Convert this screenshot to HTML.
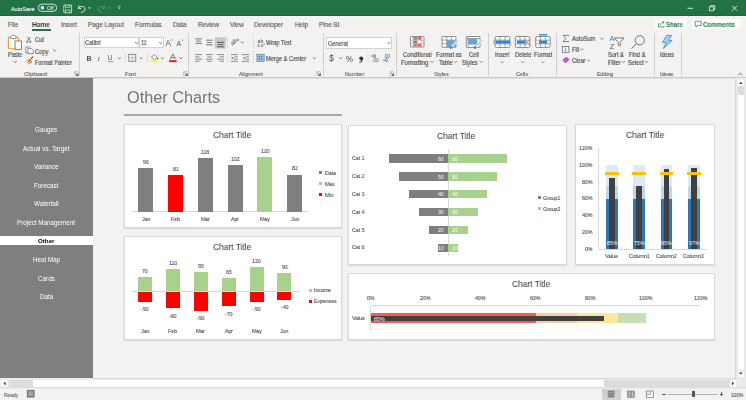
<!DOCTYPE html><html><head><meta charset="utf-8"><style>
html,body{margin:0;padding:0;width:746px;height:400px;overflow:hidden;background:#f3f2f1}
body{position:relative;font-family:"Liberation Sans",sans-serif}
div{position:absolute}
.t{white-space:nowrap;line-height:1.4;will-change:transform}
svg{position:absolute;overflow:visible}
</style></head><body>
<div style="left:0.00px;top:0.00px;width:746.00px;height:16.00px;background:#217346;"></div>
<div style="left:0.00px;top:15.00px;width:746.00px;height:1.00px;background:#1b6a3d;"></div>
<div style="left:0.00px;top:16.00px;width:746.00px;height:61.00px;background:#f3f2f1;"></div>
<div style="left:0.00px;top:16.00px;width:746.00px;height:1.00px;background:#f8f8f7;"></div>
<div style="left:0.00px;top:77.00px;width:746.00px;height:1.00px;background:#cbc9c7;"></div>
<div style="left:93.00px;top:78.00px;width:643.00px;height:1.00px;background:#e3e3e3;"></div>
<div style="left:0.00px;top:79.00px;width:736.00px;height:299.00px;background:#f2f2f2;"></div>
<div style="left:0.00px;top:78.00px;width:93.00px;height:300.00px;background:#7f7f7f;"></div>
<div class="t" style="left:8.00px;top:19.59px;font-size:7.040000000000001px;color:#555555;-webkit-text-stroke:0.12px #555555;transform:scaleX(0.9090909090909091);transform-origin:0 0;">File</div>
<div class="t" style="left:32.00px;top:19.59px;font-size:7.040000000000001px;color:#323130;font-weight:bold;transform:scaleX(0.9090909090909091);transform-origin:0 0;">Home</div>
<div class="t" style="left:60.50px;top:19.59px;font-size:7.040000000000001px;color:#555555;-webkit-text-stroke:0.12px #555555;transform:scaleX(0.9090909090909091);transform-origin:0 0;">Insert</div>
<div class="t" style="left:88.00px;top:19.59px;font-size:7.040000000000001px;color:#555555;-webkit-text-stroke:0.12px #555555;transform:scaleX(0.9090909090909091);transform-origin:0 0;">Page Layout</div>
<div class="t" style="left:135.00px;top:19.59px;font-size:7.040000000000001px;color:#555555;-webkit-text-stroke:0.12px #555555;transform:scaleX(0.9090909090909091);transform-origin:0 0;">Formulas</div>
<div class="t" style="left:173.00px;top:19.59px;font-size:7.040000000000001px;color:#555555;-webkit-text-stroke:0.12px #555555;transform:scaleX(0.9090909090909091);transform-origin:0 0;">Data</div>
<div class="t" style="left:197.70px;top:19.59px;font-size:7.040000000000001px;color:#555555;-webkit-text-stroke:0.12px #555555;transform:scaleX(0.9090909090909091);transform-origin:0 0;">Review</div>
<div class="t" style="left:229.60px;top:19.59px;font-size:7.040000000000001px;color:#555555;-webkit-text-stroke:0.12px #555555;transform:scaleX(0.9090909090909091);transform-origin:0 0;">View</div>
<div class="t" style="left:254.00px;top:19.59px;font-size:7.040000000000001px;color:#555555;-webkit-text-stroke:0.12px #555555;transform:scaleX(0.9090909090909091);transform-origin:0 0;">Developer</div>
<div class="t" style="left:295.00px;top:19.59px;font-size:7.040000000000001px;color:#555555;-webkit-text-stroke:0.12px #555555;transform:scaleX(0.9090909090909091);transform-origin:0 0;">Help</div>
<div class="t" style="left:319.40px;top:19.59px;font-size:7.040000000000001px;color:#555555;-webkit-text-stroke:0.12px #555555;transform:scaleX(0.9090909090909091);transform-origin:0 0;">Pine BI</div>
<div style="left:32.00px;top:29.00px;width:19.00px;height:2.00px;background:#217346;"></div>
<div class="t" style="left:11.00px;top:4.74px;font-size:6.05px;color:#f4f8f5;-webkit-text-stroke:0.12px #f4f8f5;transform:scaleX(0.9090909090909091);transform-origin:0 0;-webkit-text-stroke:0.15px #f4f8f5;">AutoSave</div>
<div style="left:655.00px;top:19.00px;width:32.00px;height:10.00px;background:#fff;border-radius:1px;"></div>
<div style="left:692.00px;top:19.00px;width:48.00px;height:10.00px;background:#fff;border-radius:1px;"></div>
<div class="t" style="left:666.00px;top:20.11px;font-size:6.71px;color:#217346;font-weight:bold;transform:scaleX(0.9090909090909091);transform-origin:0 0;">Share</div>
<div class="t" style="left:703.00px;top:20.09px;font-size:6.765000000000001px;color:#217346;font-weight:bold;transform:scaleX(0.9090909090909091);transform-origin:0 0;">Comments</div>
<div class="t" style="left:7.84px;top:51.46px;font-size:6.272px;color:#444444;-webkit-text-stroke:0.12px #444444;transform:scaleX(0.8928571428571428);transform-origin:0 0;">Paste</div>
<div class="t" style="left:35.00px;top:36.22px;font-size:6.384000000000001px;color:#444444;-webkit-text-stroke:0.12px #444444;transform:scaleX(0.8928571428571428);transform-origin:0 0;">Cut</div>
<div class="t" style="left:35.00px;top:47.72px;font-size:6.384000000000001px;color:#444444;-webkit-text-stroke:0.12px #444444;transform:scaleX(0.8928571428571428);transform-origin:0 0;">Copy</div>
<div class="t" style="left:35.00px;top:58.96px;font-size:6.272px;color:#444444;-webkit-text-stroke:0.12px #444444;transform:scaleX(0.8928571428571428);transform-origin:0 0;">Format Painter</div>
<div class="t" style="left:23.94px;top:70.24px;font-size:6.048000000000001px;color:#605e5c;-webkit-text-stroke:0.12px #605e5c;transform:scaleX(0.8928571428571428);transform-origin:0 0;">Clipboard</div>
<div class="t" style="left:124.60px;top:70.24px;font-size:6.048000000000001px;color:#605e5c;-webkit-text-stroke:0.12px #605e5c;transform:scaleX(0.8928571428571428);transform-origin:0 0;">Font</div>
<div class="t" style="left:239.49px;top:70.24px;font-size:6.048000000000001px;color:#605e5c;-webkit-text-stroke:0.12px #605e5c;transform:scaleX(0.8928571428571428);transform-origin:0 0;">Alignment</div>
<div class="t" style="left:344.90px;top:70.24px;font-size:6.048000000000001px;color:#605e5c;-webkit-text-stroke:0.12px #605e5c;transform:scaleX(0.8928571428571428);transform-origin:0 0;">Number</div>
<div class="t" style="left:434.15px;top:70.24px;font-size:6.048000000000001px;color:#605e5c;-webkit-text-stroke:0.12px #605e5c;transform:scaleX(0.8928571428571428);transform-origin:0 0;">Styles</div>
<div class="t" style="left:515.50px;top:70.24px;font-size:6.048000000000001px;color:#605e5c;-webkit-text-stroke:0.12px #605e5c;transform:scaleX(0.8928571428571428);transform-origin:0 0;">Cells</div>
<div class="t" style="left:596.74px;top:70.24px;font-size:6.048000000000001px;color:#605e5c;-webkit-text-stroke:0.12px #605e5c;transform:scaleX(0.8928571428571428);transform-origin:0 0;">Editing</div>
<div class="t" style="left:660.39px;top:70.24px;font-size:6.048000000000001px;color:#605e5c;-webkit-text-stroke:0.12px #605e5c;transform:scaleX(0.8928571428571428);transform-origin:0 0;">Ideas</div>
<div style="left:84.00px;top:37.00px;width:55.00px;height:11.00px;background:#fff;border:0.7px solid #d4d2d0;box-sizing:border-box;"></div>
<div style="left:139.00px;top:37.00px;width:25.00px;height:11.00px;background:#fff;border:0.7px solid #d4d2d0;box-sizing:border-box;"></div>
<div class="t" style="left:84.80px;top:39.26px;font-size:6.272px;color:#444444;-webkit-text-stroke:0.12px #444444;transform:scaleX(0.8928571428571428);transform-origin:0 0;">Calibri</div>
<div class="t" style="left:141.00px;top:39.26px;font-size:6.272px;color:#444444;-webkit-text-stroke:0.12px #444444;transform:scaleX(0.8928571428571428);transform-origin:0 0;">11</div>
<div style="left:326.00px;top:37.00px;width:66.00px;height:12.00px;background:#fff;border:0.7px solid #d4d2d0;box-sizing:border-box;"></div>
<div class="t" style="left:328.00px;top:39.66px;font-size:6.272px;color:#444444;-webkit-text-stroke:0.12px #444444;transform:scaleX(0.8928571428571428);transform-origin:0 0;">General</div>
<div class="t" style="left:266.00px;top:39.12px;font-size:6.384000000000001px;color:#444444;-webkit-text-stroke:0.12px #444444;transform:scaleX(0.8928571428571428);transform-origin:0 0;">Wrap Text</div>
<div class="t" style="left:266.00px;top:54.72px;font-size:6.384000000000001px;color:#444444;-webkit-text-stroke:0.12px #444444;transform:scaleX(0.8928571428571428);transform-origin:0 0;">Merge &amp; Center</div>
<div class="t" style="left:402.74px;top:50.92px;font-size:6.384000000000001px;color:#444444;-webkit-text-stroke:0.12px #444444;transform:scaleX(0.8928571428571428);transform-origin:0 0;">Conditional</div>
<div class="t" style="left:400.88px;top:58.82px;font-size:6.384000000000001px;color:#444444;-webkit-text-stroke:0.12px #444444;transform:scaleX(0.8928571428571428);transform-origin:0 0;">Formatting</div>
<div class="t" style="left:435.67px;top:50.92px;font-size:6.384000000000001px;color:#444444;-webkit-text-stroke:0.12px #444444;transform:scaleX(0.8928571428571428);transform-origin:0 0;">Format as</div>
<div class="t" style="left:438.69px;top:58.82px;font-size:6.384000000000001px;color:#444444;-webkit-text-stroke:0.12px #444444;transform:scaleX(0.8928571428571428);transform-origin:0 0;">Table</div>
<div class="t" style="left:468.59px;top:50.92px;font-size:6.384000000000001px;color:#444444;-webkit-text-stroke:0.12px #444444;transform:scaleX(0.8928571428571428);transform-origin:0 0;">Cell</div>
<div class="t" style="left:462.24px;top:58.82px;font-size:6.384000000000001px;color:#444444;-webkit-text-stroke:0.12px #444444;transform:scaleX(0.8928571428571428);transform-origin:0 0;">Styles</div>
<div class="t" style="left:494.87px;top:50.92px;font-size:6.384000000000001px;color:#444444;-webkit-text-stroke:0.12px #444444;transform:scaleX(0.8928571428571428);transform-origin:0 0;">Insert</div>
<div class="t" style="left:514.76px;top:50.92px;font-size:6.384000000000001px;color:#444444;-webkit-text-stroke:0.12px #444444;transform:scaleX(0.8928571428571428);transform-origin:0 0;">Delete</div>
<div class="t" style="left:533.97px;top:50.92px;font-size:6.384000000000001px;color:#444444;-webkit-text-stroke:0.12px #444444;transform:scaleX(0.8928571428571428);transform-origin:0 0;">Format</div>
<div class="t" style="left:572.00px;top:35.42px;font-size:6.384000000000001px;color:#444444;-webkit-text-stroke:0.12px #444444;transform:scaleX(0.8928571428571428);transform-origin:0 0;">AutoSum</div>
<div class="t" style="left:572.00px;top:46.22px;font-size:6.384000000000001px;color:#444444;-webkit-text-stroke:0.12px #444444;transform:scaleX(0.8928571428571428);transform-origin:0 0;">Fill</div>
<div class="t" style="left:572.00px;top:57.22px;font-size:6.384000000000001px;color:#444444;-webkit-text-stroke:0.12px #444444;transform:scaleX(0.8928571428571428);transform-origin:0 0;">Clear</div>
<div class="t" style="left:608.08px;top:50.92px;font-size:6.384000000000001px;color:#444444;-webkit-text-stroke:0.12px #444444;transform:scaleX(0.8928571428571428);transform-origin:0 0;">Sort &amp;</div>
<div class="t" style="left:607.67px;top:58.82px;font-size:6.384000000000001px;color:#444444;-webkit-text-stroke:0.12px #444444;transform:scaleX(0.8928571428571428);transform-origin:0 0;">Filter</div>
<div class="t" style="left:628.76px;top:50.92px;font-size:6.384000000000001px;color:#444444;-webkit-text-stroke:0.12px #444444;transform:scaleX(0.8928571428571428);transform-origin:0 0;">Find &amp;</div>
<div class="t" style="left:627.58px;top:58.82px;font-size:6.384000000000001px;color:#444444;-webkit-text-stroke:0.12px #444444;transform:scaleX(0.8928571428571428);transform-origin:0 0;">Select</div>
<div class="t" style="left:660.03px;top:50.92px;font-size:6.384000000000001px;color:#444444;-webkit-text-stroke:0.12px #444444;transform:scaleX(0.8928571428571428);transform-origin:0 0;">Ideas</div>
<div style="left:79.00px;top:33.00px;width:1.00px;height:43.00px;background:#d2d0ce;"></div>
<div style="left:188.00px;top:33.00px;width:1.00px;height:43.00px;background:#d2d0ce;"></div>
<div style="left:323.00px;top:33.00px;width:1.00px;height:43.00px;background:#d2d0ce;"></div>
<div style="left:396.00px;top:33.00px;width:1.00px;height:43.00px;background:#d2d0ce;"></div>
<div style="left:488.00px;top:33.00px;width:1.00px;height:43.00px;background:#d2d0ce;"></div>
<div style="left:556.00px;top:33.00px;width:1.00px;height:43.00px;background:#d2d0ce;"></div>
<div style="left:654.00px;top:33.00px;width:1.00px;height:43.00px;background:#d2d0ce;"></div>
<div style="left:681.00px;top:33.00px;width:1.00px;height:43.00px;background:#d2d0ce;"></div>
<div class="t" style="left:35.47px;top:125.95px;font-size:6.3px;color:#fff;">Gauges</div>
<div class="t" style="left:23.27px;top:144.53px;font-size:6.3px;color:#fff;">Actual vs. Target</div>
<div class="t" style="left:34.30px;top:163.11px;font-size:6.3px;color:#fff;">Variance</div>
<div class="t" style="left:34.25px;top:181.69px;font-size:6.3px;color:#fff;">Forecast</div>
<div class="t" style="left:34.19px;top:200.27px;font-size:6.3px;color:#fff;">Waterfall</div>
<div class="t" style="left:17.43px;top:218.85px;font-size:6.3px;color:#fff;">Project Management</div>
<div style="left:0.00px;top:236.00px;width:93.00px;height:9.00px;background:#fff;"></div>
<div class="t" style="left:38.23px;top:237.47px;font-size:6.2px;color:#000;font-weight:bold;">Other</div>
<div class="t" style="left:32.84px;top:256.01px;font-size:6.3px;color:#fff;">Heat Map</div>
<div class="t" style="left:38.10px;top:274.59px;font-size:6.3px;color:#fff;">Cards</div>
<div class="t" style="left:39.85px;top:293.17px;font-size:6.3px;color:#fff;">Data</div>
<div class="t" style="left:127.00px;top:85.69px;font-size:16.3px;color:#787474;">Other Charts</div>
<div style="left:124.00px;top:114.00px;width:218.00px;height:2.00px;background:#a6a6a6;"></div>
<div style="left:0.00px;top:378.00px;width:746.00px;height:11.00px;background:#ebebeb;"></div>
<div style="left:93.00px;top:378.00px;width:643.00px;height:1.00px;background:#d9d9d9;"></div>
<div style="left:0.00px;top:387.00px;width:746.00px;height:1.00px;background:#dddddd;"></div>
<div style="left:736.00px;top:79.00px;width:10.00px;height:299.00px;background:#e9e9e9;"></div>
<div style="left:735.00px;top:79.00px;width:1.00px;height:299.00px;background:#d8d8d8;"></div>
<div style="left:1.00px;top:380.00px;width:7.00px;height:7.00px;background:#fff;"></div>
<div style="left:9.00px;top:380.00px;width:24.00px;height:7.00px;background:#dcdcdc;"></div>
<div style="left:33.00px;top:380.00px;width:571.00px;height:7.00px;background:#fff;"></div>
<div style="left:604.00px;top:380.00px;width:126.00px;height:7.00px;background:#dcdcdc;"></div>
<div style="left:730.00px;top:380.00px;width:6.00px;height:7.00px;background:#fff;"></div>
<div style="left:738.00px;top:80.00px;width:6.00px;height:6.00px;background:#fff;"></div>
<div style="left:738.00px;top:86.00px;width:6.00px;height:9.00px;background:#dcdcdc;"></div>
<div style="left:738.00px;top:95.00px;width:6.00px;height:275.00px;background:#fff;"></div>
<div style="left:738.00px;top:371.00px;width:6.00px;height:6.00px;background:#fff;"></div>
<div style="left:0.00px;top:389.00px;width:746.00px;height:11.00px;background:#f3f2f1;"></div>
<div class="t" style="left:3.90px;top:391.31px;font-size:5.856px;color:#605e5c;-webkit-text-stroke:0.12px #605e5c;transform:scaleX(0.819672131147541);transform-origin:0 0;">Ready</div>
<div style="left:602.00px;top:389.00px;width:19.00px;height:11.00px;background:#d2d0ce;"></div>
<div class="t" style="left:730.52px;top:391.01px;font-size:5.856px;color:#555;-webkit-text-stroke:0.12px #555;transform:scaleX(0.819672131147541);transform-origin:0 0;">100%</div>
<div style="left:668.00px;top:394.00px;width:50.00px;height:1.00px;background:#b3b0ad;"></div>
<div style="left:692.00px;top:391.00px;width:3.00px;height:6.00px;background:#555;"></div>
<div style="left:662.00px;top:394.00px;width:4.00px;height:1.00px;background:#605e5c;"></div>
<div style="left:720.00px;top:394.00px;width:3.00px;height:1.00px;background:#605e5c;"></div>
<div style="left:721.00px;top:392.00px;width:1.00px;height:4.00px;background:#605e5c;"></div>
<div style="left:124.00px;top:124.00px;width:218.00px;height:104.00px;background:#fff;border:1px solid #d9d9d9;box-sizing:border-box;box-shadow:0 0.6px 1.2px rgba(0,0,0,0.12);"></div>
<div class="t" style="left:213.36px;top:127.95px;font-size:9.408000000000001px;color:#4f4f4f;-webkit-text-stroke:0.12px #4f4f4f;transform:scaleX(0.8928571428571428);transform-origin:0 0;">Chart Title</div>
<div style="left:131.00px;top:211.00px;width:178.00px;height:1.00px;background:#d9d9d9;"></div>
<div style="left:138.00px;top:168.00px;width:15.00px;height:44.00px;background:#7f7f7f;"></div>
<div class="t" style="left:142.81px;top:157.93px;font-size:5.824000000000001px;color:#4f4f4f;-webkit-text-stroke:0.12px #4f4f4f;transform:scaleX(0.8928571428571428);transform-origin:0 0;">96</div>
<div class="t" style="left:141.51px;top:215.42px;font-size:5.824000000000001px;color:#4f4f4f;-webkit-text-stroke:0.12px #4f4f4f;transform:scaleX(0.8928571428571428);transform-origin:0 0;">Jan</div>
<div style="left:168.00px;top:175.00px;width:15.00px;height:37.00px;background:#ff0000;"></div>
<div class="t" style="left:172.61px;top:164.71px;font-size:5.824000000000001px;color:#4f4f4f;-webkit-text-stroke:0.12px #4f4f4f;transform:scaleX(0.8928571428571428);transform-origin:0 0;">81</div>
<div class="t" style="left:171.02px;top:215.42px;font-size:5.824000000000001px;color:#4f4f4f;-webkit-text-stroke:0.12px #4f4f4f;transform:scaleX(0.8928571428571428);transform-origin:0 0;">Feb</div>
<div style="left:198.00px;top:158.00px;width:15.00px;height:54.00px;background:#7f7f7f;"></div>
<div class="t" style="left:201.15px;top:147.99px;font-size:5.824000000000001px;color:#4f4f4f;-webkit-text-stroke:0.12px #4f4f4f;transform:scaleX(0.8928571428571428);transform-origin:0 0;">118</div>
<div class="t" style="left:200.82px;top:215.42px;font-size:5.824000000000001px;color:#4f4f4f;-webkit-text-stroke:0.12px #4f4f4f;transform:scaleX(0.8928571428571428);transform-origin:0 0;">Mar</div>
<div style="left:228.00px;top:165.00px;width:15.00px;height:47.00px;background:#7f7f7f;"></div>
<div class="t" style="left:230.76px;top:155.22px;font-size:5.824000000000001px;color:#4f4f4f;-webkit-text-stroke:0.12px #4f4f4f;transform:scaleX(0.8928571428571428);transform-origin:0 0;">102</div>
<div class="t" style="left:231.05px;top:215.42px;font-size:5.824000000000001px;color:#4f4f4f;-webkit-text-stroke:0.12px #4f4f4f;transform:scaleX(0.8928571428571428);transform-origin:0 0;">Apr</div>
<div style="left:257.00px;top:157.00px;width:15.00px;height:55.00px;background:#a9d18e;"></div>
<div class="t" style="left:260.56px;top:147.08px;font-size:5.824000000000001px;color:#4f4f4f;-webkit-text-stroke:0.12px #4f4f4f;transform:scaleX(0.8928571428571428);transform-origin:0 0;">120</div>
<div class="t" style="left:259.99px;top:215.42px;font-size:5.824000000000001px;color:#4f4f4f;-webkit-text-stroke:0.12px #4f4f4f;transform:scaleX(0.8928571428571428);transform-origin:0 0;">May</div>
<div style="left:287.00px;top:175.00px;width:15.00px;height:37.00px;background:#7f7f7f;"></div>
<div class="t" style="left:291.81px;top:164.26px;font-size:5.824000000000001px;color:#4f4f4f;-webkit-text-stroke:0.12px #4f4f4f;transform:scaleX(0.8928571428571428);transform-origin:0 0;">82</div>
<div class="t" style="left:290.51px;top:215.42px;font-size:5.824000000000001px;color:#4f4f4f;-webkit-text-stroke:0.12px #4f4f4f;transform:scaleX(0.8928571428571428);transform-origin:0 0;">Jun</div>
<div style="left:319.00px;top:171.00px;width:3.00px;height:3.00px;background:#7f7f7f;"></div>
<div class="t" style="left:324.50px;top:168.82px;font-size:5.824000000000001px;color:#4f4f4f;-webkit-text-stroke:0.12px #4f4f4f;transform:scaleX(0.8928571428571428);transform-origin:0 0;">Data</div>
<div style="left:319.00px;top:182.00px;width:3.00px;height:3.00px;background:#a9d18e;"></div>
<div class="t" style="left:324.50px;top:180.12px;font-size:5.824000000000001px;color:#4f4f4f;-webkit-text-stroke:0.12px #4f4f4f;transform:scaleX(0.8928571428571428);transform-origin:0 0;">Max</div>
<div style="left:319.00px;top:193.00px;width:3.00px;height:3.00px;background:#ff0000;"></div>
<div class="t" style="left:324.50px;top:190.62px;font-size:5.824000000000001px;color:#4f4f4f;-webkit-text-stroke:0.12px #4f4f4f;transform:scaleX(0.8928571428571428);transform-origin:0 0;">Min</div>
<div style="left:124.00px;top:236.00px;width:218.00px;height:104.00px;background:#fff;border:1px solid #d9d9d9;box-sizing:border-box;box-shadow:0 0.6px 1.2px rgba(0,0,0,0.12);"></div>
<div class="t" style="left:213.36px;top:239.95px;font-size:9.408000000000001px;color:#4f4f4f;-webkit-text-stroke:0.12px #4f4f4f;transform:scaleX(0.8928571428571428);transform-origin:0 0;">Chart Title</div>
<div style="left:138.00px;top:277.00px;width:14.00px;height:14.00px;background:#a9d18e;"></div>
<div style="left:138.00px;top:291.00px;width:14.00px;height:11.00px;background:#ff0000;"></div>
<div class="t" style="left:142.01px;top:266.93px;font-size:5.824000000000001px;color:#4f4f4f;-webkit-text-stroke:0.12px #4f4f4f;transform:scaleX(0.8928571428571428);transform-origin:0 0;">70</div>
<div class="t" style="left:141.14px;top:305.47px;font-size:5.824000000000001px;color:#4f4f4f;-webkit-text-stroke:0.12px #4f4f4f;transform:scaleX(0.8928571428571428);transform-origin:0 0;">-50</div>
<div class="t" style="left:140.71px;top:327.42px;font-size:5.824000000000001px;color:#4f4f4f;-webkit-text-stroke:0.12px #4f4f4f;transform:scaleX(0.8928571428571428);transform-origin:0 0;">Jan</div>
<div style="left:166.00px;top:269.00px;width:14.00px;height:22.00px;background:#a9d18e;"></div>
<div style="left:166.00px;top:291.00px;width:14.00px;height:17.00px;background:#ff0000;"></div>
<div class="t" style="left:168.65px;top:258.65px;font-size:5.824000000000001px;color:#4f4f4f;-webkit-text-stroke:0.12px #4f4f4f;transform:scaleX(0.8928571428571428);transform-origin:0 0;">110</div>
<div class="t" style="left:169.04px;top:311.86px;font-size:5.824000000000001px;color:#4f4f4f;-webkit-text-stroke:0.12px #4f4f4f;transform:scaleX(0.8928571428571428);transform-origin:0 0;">-80</div>
<div class="t" style="left:168.32px;top:327.42px;font-size:5.824000000000001px;color:#4f4f4f;-webkit-text-stroke:0.12px #4f4f4f;transform:scaleX(0.8928571428571428);transform-origin:0 0;">Feb</div>
<div style="left:194.00px;top:272.00px;width:14.00px;height:19.00px;background:#a9d18e;"></div>
<div style="left:194.00px;top:291.00px;width:14.00px;height:20.00px;background:#ff0000;"></div>
<div class="t" style="left:197.81px;top:261.76px;font-size:5.824000000000001px;color:#4f4f4f;-webkit-text-stroke:0.12px #4f4f4f;transform:scaleX(0.8928571428571428);transform-origin:0 0;">95</div>
<div class="t" style="left:196.94px;top:313.99px;font-size:5.824000000000001px;color:#4f4f4f;-webkit-text-stroke:0.12px #4f4f4f;transform:scaleX(0.8928571428571428);transform-origin:0 0;">-90</div>
<div class="t" style="left:196.22px;top:327.42px;font-size:5.824000000000001px;color:#4f4f4f;-webkit-text-stroke:0.12px #4f4f4f;transform:scaleX(0.8928571428571428);transform-origin:0 0;">Mar</div>
<div style="left:222.00px;top:278.00px;width:14.00px;height:13.00px;background:#a9d18e;"></div>
<div style="left:222.00px;top:291.00px;width:14.00px;height:15.00px;background:#ff0000;"></div>
<div class="t" style="left:225.71px;top:267.97px;font-size:5.824000000000001px;color:#4f4f4f;-webkit-text-stroke:0.12px #4f4f4f;transform:scaleX(0.8928571428571428);transform-origin:0 0;">65</div>
<div class="t" style="left:224.84px;top:309.73px;font-size:5.824000000000001px;color:#4f4f4f;-webkit-text-stroke:0.12px #4f4f4f;transform:scaleX(0.8928571428571428);transform-origin:0 0;">-70</div>
<div class="t" style="left:224.55px;top:327.42px;font-size:5.824000000000001px;color:#4f4f4f;-webkit-text-stroke:0.12px #4f4f4f;transform:scaleX(0.8928571428571428);transform-origin:0 0;">Apr</div>
<div style="left:250.00px;top:267.00px;width:14.00px;height:24.00px;background:#a9d18e;"></div>
<div style="left:250.00px;top:291.00px;width:14.00px;height:11.00px;background:#ff0000;"></div>
<div class="t" style="left:252.16px;top:256.58px;font-size:5.824000000000001px;color:#4f4f4f;-webkit-text-stroke:0.12px #4f4f4f;transform:scaleX(0.8928571428571428);transform-origin:0 0;">120</div>
<div class="t" style="left:252.74px;top:305.47px;font-size:5.824000000000001px;color:#4f4f4f;-webkit-text-stroke:0.12px #4f4f4f;transform:scaleX(0.8928571428571428);transform-origin:0 0;">-50</div>
<div class="t" style="left:251.59px;top:327.42px;font-size:5.824000000000001px;color:#4f4f4f;-webkit-text-stroke:0.12px #4f4f4f;transform:scaleX(0.8928571428571428);transform-origin:0 0;">May</div>
<div style="left:277.00px;top:273.00px;width:14.00px;height:18.00px;background:#a9d18e;"></div>
<div style="left:277.00px;top:291.00px;width:14.00px;height:9.00px;background:#ff0000;"></div>
<div class="t" style="left:281.51px;top:262.79px;font-size:5.824000000000001px;color:#4f4f4f;-webkit-text-stroke:0.12px #4f4f4f;transform:scaleX(0.8928571428571428);transform-origin:0 0;">90</div>
<div class="t" style="left:280.64px;top:303.34px;font-size:5.824000000000001px;color:#4f4f4f;-webkit-text-stroke:0.12px #4f4f4f;transform:scaleX(0.8928571428571428);transform-origin:0 0;">-40</div>
<div class="t" style="left:280.21px;top:327.42px;font-size:5.824000000000001px;color:#4f4f4f;-webkit-text-stroke:0.12px #4f4f4f;transform:scaleX(0.8928571428571428);transform-origin:0 0;">Jun</div>
<div style="left:131.00px;top:291.00px;width:168.00px;height:1.00px;background:#d9d9d9;"></div>
<div style="left:309.00px;top:289.00px;width:3.00px;height:3.00px;background:#a9d18e;"></div>
<div class="t" style="left:314.10px;top:286.42px;font-size:5.824000000000001px;color:#4f4f4f;-webkit-text-stroke:0.12px #4f4f4f;transform:scaleX(0.8928571428571428);transform-origin:0 0;">Income</div>
<div style="left:309.00px;top:300.00px;width:3.00px;height:3.00px;background:#ff0000;"></div>
<div class="t" style="left:314.10px;top:297.42px;font-size:5.824000000000001px;color:#4f4f4f;-webkit-text-stroke:0.12px #4f4f4f;transform:scaleX(0.8928571428571428);transform-origin:0 0;">Expenses</div>
<div style="left:348.00px;top:125.00px;width:219.00px;height:140.00px;background:#fff;border:1px solid #d9d9d9;box-sizing:border-box;box-shadow:0 0.6px 1.2px rgba(0,0,0,0.12);"></div>
<div class="t" style="left:437.36px;top:128.85px;font-size:9.408000000000001px;color:#4f4f4f;-webkit-text-stroke:0.12px #4f4f4f;transform:scaleX(0.8928571428571428);transform-origin:0 0;">Chart Title</div>
<div style="left:448.00px;top:149.00px;width:1.00px;height:107.00px;background:#d9d9d9;"></div>
<div style="left:389.00px;top:154.00px;width:59.00px;height:9.00px;background:#7f7f7f;"></div>
<div style="left:448.00px;top:154.00px;width:59.00px;height:9.00px;background:#a9d18e;"></div>
<div class="t" style="left:437.82px;top:154.62px;font-size:5.824000000000001px;color:#fff;transform:scaleX(0.8928571428571428);transform-origin:0 0;">60</div>
<div class="t" style="left:451.60px;top:154.62px;font-size:5.824000000000001px;color:#fff;transform:scaleX(0.8928571428571428);transform-origin:0 0;">60</div>
<div class="t" style="left:351.50px;top:153.92px;font-size:5.824000000000001px;color:#4f4f4f;-webkit-text-stroke:0.12px #4f4f4f;transform:scaleX(0.8928571428571428);transform-origin:0 0;">Cat 1</div>
<div style="left:399.00px;top:172.00px;width:49.00px;height:9.00px;background:#7f7f7f;"></div>
<div style="left:448.00px;top:172.00px;width:49.00px;height:9.00px;background:#a9d18e;"></div>
<div class="t" style="left:437.82px;top:172.52px;font-size:5.824000000000001px;color:#fff;transform:scaleX(0.8928571428571428);transform-origin:0 0;">50</div>
<div class="t" style="left:451.60px;top:172.52px;font-size:5.824000000000001px;color:#fff;transform:scaleX(0.8928571428571428);transform-origin:0 0;">50</div>
<div class="t" style="left:351.50px;top:171.82px;font-size:5.824000000000001px;color:#4f4f4f;-webkit-text-stroke:0.12px #4f4f4f;transform:scaleX(0.8928571428571428);transform-origin:0 0;">Cat 2</div>
<div style="left:409.00px;top:190.00px;width:39.00px;height:8.00px;background:#7f7f7f;"></div>
<div style="left:448.00px;top:190.00px;width:39.00px;height:8.00px;background:#a9d18e;"></div>
<div class="t" style="left:437.82px;top:190.42px;font-size:5.824000000000001px;color:#fff;transform:scaleX(0.8928571428571428);transform-origin:0 0;">40</div>
<div class="t" style="left:451.60px;top:190.42px;font-size:5.824000000000001px;color:#fff;transform:scaleX(0.8928571428571428);transform-origin:0 0;">40</div>
<div class="t" style="left:351.50px;top:189.72px;font-size:5.824000000000001px;color:#4f4f4f;-webkit-text-stroke:0.12px #4f4f4f;transform:scaleX(0.8928571428571428);transform-origin:0 0;">Cat 3</div>
<div style="left:419.00px;top:208.00px;width:29.00px;height:8.00px;background:#7f7f7f;"></div>
<div style="left:448.00px;top:208.00px;width:30.00px;height:8.00px;background:#a9d18e;"></div>
<div class="t" style="left:437.82px;top:208.32px;font-size:5.824000000000001px;color:#fff;transform:scaleX(0.8928571428571428);transform-origin:0 0;">30</div>
<div class="t" style="left:451.60px;top:208.32px;font-size:5.824000000000001px;color:#fff;transform:scaleX(0.8928571428571428);transform-origin:0 0;">30</div>
<div class="t" style="left:351.50px;top:207.62px;font-size:5.824000000000001px;color:#4f4f4f;-webkit-text-stroke:0.12px #4f4f4f;transform:scaleX(0.8928571428571428);transform-origin:0 0;">Cat 4</div>
<div style="left:429.00px;top:226.00px;width:19.00px;height:8.00px;background:#7f7f7f;"></div>
<div style="left:448.00px;top:226.00px;width:20.00px;height:8.00px;background:#a9d18e;"></div>
<div class="t" style="left:437.82px;top:226.22px;font-size:5.824000000000001px;color:#fff;transform:scaleX(0.8928571428571428);transform-origin:0 0;">20</div>
<div class="t" style="left:451.60px;top:226.22px;font-size:5.824000000000001px;color:#fff;transform:scaleX(0.8928571428571428);transform-origin:0 0;">20</div>
<div class="t" style="left:351.50px;top:225.52px;font-size:5.824000000000001px;color:#4f4f4f;-webkit-text-stroke:0.12px #4f4f4f;transform:scaleX(0.8928571428571428);transform-origin:0 0;">Cat 5</div>
<div style="left:438.00px;top:244.00px;width:10.00px;height:8.00px;background:#7f7f7f;"></div>
<div style="left:448.00px;top:244.00px;width:10.00px;height:8.00px;background:#a9d18e;"></div>
<div class="t" style="left:437.82px;top:244.12px;font-size:5.824000000000001px;color:#fff;transform:scaleX(0.8928571428571428);transform-origin:0 0;">10</div>
<div class="t" style="left:451.60px;top:244.12px;font-size:5.824000000000001px;color:#fff;transform:scaleX(0.8928571428571428);transform-origin:0 0;">10</div>
<div class="t" style="left:351.50px;top:243.42px;font-size:5.824000000000001px;color:#4f4f4f;-webkit-text-stroke:0.12px #4f4f4f;transform:scaleX(0.8928571428571428);transform-origin:0 0;">Cat 6</div>
<div style="left:538.00px;top:196.00px;width:3.00px;height:3.00px;background:#7f7f7f;"></div>
<div class="t" style="left:543.00px;top:193.72px;font-size:5.824000000000001px;color:#4f4f4f;-webkit-text-stroke:0.12px #4f4f4f;transform:scaleX(0.8928571428571428);transform-origin:0 0;">Group1</div>
<div style="left:538.00px;top:207.00px;width:3.00px;height:3.00px;background:#a9d18e;"></div>
<div class="t" style="left:543.00px;top:204.82px;font-size:5.824000000000001px;color:#4f4f4f;-webkit-text-stroke:0.12px #4f4f4f;transform:scaleX(0.8928571428571428);transform-origin:0 0;">Group2</div>
<div style="left:575.00px;top:124.00px;width:140.00px;height:141.00px;background:#fff;border:1px solid #d9d9d9;box-sizing:border-box;box-shadow:0 0.6px 1.2px rgba(0,0,0,0.12);"></div>
<div class="t" style="left:625.56px;top:128.25px;font-size:9.408000000000001px;color:#4f4f4f;-webkit-text-stroke:0.12px #4f4f4f;transform:scaleX(0.8928571428571428);transform-origin:0 0;">Chart Title</div>
<div class="t" style="left:584.98px;top:244.62px;font-size:5.824000000000001px;color:#4f4f4f;-webkit-text-stroke:0.12px #4f4f4f;transform:scaleX(0.8928571428571428);transform-origin:0 0;">0%</div>
<div class="t" style="left:582.09px;top:227.87px;font-size:5.824000000000001px;color:#4f4f4f;-webkit-text-stroke:0.12px #4f4f4f;transform:scaleX(0.8928571428571428);transform-origin:0 0;">20%</div>
<div class="t" style="left:582.09px;top:211.12px;font-size:5.824000000000001px;color:#4f4f4f;-webkit-text-stroke:0.12px #4f4f4f;transform:scaleX(0.8928571428571428);transform-origin:0 0;">40%</div>
<div class="t" style="left:582.09px;top:194.37px;font-size:5.824000000000001px;color:#4f4f4f;-webkit-text-stroke:0.12px #4f4f4f;transform:scaleX(0.8928571428571428);transform-origin:0 0;">60%</div>
<div class="t" style="left:582.09px;top:177.62px;font-size:5.824000000000001px;color:#4f4f4f;-webkit-text-stroke:0.12px #4f4f4f;transform:scaleX(0.8928571428571428);transform-origin:0 0;">80%</div>
<div class="t" style="left:579.20px;top:160.87px;font-size:5.824000000000001px;color:#4f4f4f;-webkit-text-stroke:0.12px #4f4f4f;transform:scaleX(0.8928571428571428);transform-origin:0 0;">100%</div>
<div class="t" style="left:579.20px;top:144.12px;font-size:5.824000000000001px;color:#4f4f4f;-webkit-text-stroke:0.12px #4f4f4f;transform:scaleX(0.8928571428571428);transform-origin:0 0;">120%</div>
<div style="left:606.00px;top:165.00px;width:12.00px;height:21.00px;background:#deebf7;"></div>
<div style="left:606.00px;top:186.00px;width:12.00px;height:13.00px;background:#bdd7ee;"></div>
<div style="left:606.00px;top:199.00px;width:12.00px;height:50.00px;background:#2e75b6;"></div>
<div style="left:609.00px;top:178.00px;width:6.00px;height:71.00px;background:#404040;"></div>
<div style="left:605.00px;top:172.00px;width:14.00px;height:3.00px;background:#ffc000;"></div>
<div class="t" style="left:606.55px;top:239.22px;font-size:5.824000000000001px;color:#fff;transform:scaleX(0.8928571428571428);transform-origin:0 0;">85%</div>
<div class="t" style="left:605.29px;top:252.22px;font-size:5.824000000000001px;color:#4f4f4f;-webkit-text-stroke:0.12px #4f4f4f;transform:scaleX(0.8928571428571428);transform-origin:0 0;">Value</div>
<div style="left:633.00px;top:165.00px;width:12.00px;height:21.00px;background:#deebf7;"></div>
<div style="left:633.00px;top:186.00px;width:12.00px;height:13.00px;background:#bdd7ee;"></div>
<div style="left:633.00px;top:199.00px;width:12.00px;height:50.00px;background:#2e75b6;"></div>
<div style="left:636.00px;top:186.00px;width:6.00px;height:63.00px;background:#404040;"></div>
<div style="left:632.00px;top:172.00px;width:14.00px;height:3.00px;background:#ffc000;"></div>
<div class="t" style="left:633.90px;top:239.22px;font-size:5.824000000000001px;color:#fff;transform:scaleX(0.8928571428571428);transform-origin:0 0;">75%</div>
<div class="t" style="left:628.69px;top:252.22px;font-size:5.824000000000001px;color:#4f4f4f;-webkit-text-stroke:0.12px #4f4f4f;transform:scaleX(0.8928571428571428);transform-origin:0 0;">Column1</div>
<div style="left:661.00px;top:165.00px;width:11.00px;height:21.00px;background:#deebf7;"></div>
<div style="left:661.00px;top:186.00px;width:11.00px;height:13.00px;background:#bdd7ee;"></div>
<div style="left:661.00px;top:199.00px;width:11.00px;height:50.00px;background:#2e75b6;"></div>
<div style="left:664.00px;top:169.00px;width:5.00px;height:80.00px;background:#404040;"></div>
<div style="left:660.00px;top:172.00px;width:13.00px;height:3.00px;background:#ffc000;"></div>
<div class="t" style="left:661.25px;top:239.22px;font-size:5.824000000000001px;color:#fff;transform:scaleX(0.8928571428571428);transform-origin:0 0;">95%</div>
<div class="t" style="left:656.04px;top:252.22px;font-size:5.824000000000001px;color:#4f4f4f;-webkit-text-stroke:0.12px #4f4f4f;transform:scaleX(0.8928571428571428);transform-origin:0 0;">Column2</div>
<div style="left:688.00px;top:165.00px;width:12.00px;height:21.00px;background:#deebf7;"></div>
<div style="left:688.00px;top:186.00px;width:12.00px;height:13.00px;background:#bdd7ee;"></div>
<div style="left:688.00px;top:199.00px;width:12.00px;height:50.00px;background:#2e75b6;"></div>
<div style="left:691.00px;top:168.00px;width:6.00px;height:81.00px;background:#404040;"></div>
<div style="left:687.00px;top:172.00px;width:14.00px;height:3.00px;background:#ffc000;"></div>
<div class="t" style="left:688.60px;top:239.22px;font-size:5.824000000000001px;color:#fff;transform:scaleX(0.8928571428571428);transform-origin:0 0;">97%</div>
<div class="t" style="left:683.39px;top:252.22px;font-size:5.824000000000001px;color:#4f4f4f;-webkit-text-stroke:0.12px #4f4f4f;transform:scaleX(0.8928571428571428);transform-origin:0 0;">Column3</div>
<div style="left:598.00px;top:148.00px;width:1.00px;height:101.00px;background:#d9d9d9;"></div>
<div style="left:598.00px;top:249.00px;width:109.00px;height:1.00px;background:#d9d9d9;"></div>
<div style="left:348.00px;top:273.00px;width:367.00px;height:67.00px;background:#fff;border:1px solid #d9d9d9;box-sizing:border-box;box-shadow:0 0.6px 1.2px rgba(0,0,0,0.12);"></div>
<div class="t" style="left:511.86px;top:276.95px;font-size:9.408000000000001px;color:#4f4f4f;-webkit-text-stroke:0.12px #4f4f4f;transform:scaleX(0.8928571428571428);transform-origin:0 0;">Chart Title</div>
<div class="t" style="left:366.84px;top:294.02px;font-size:5.824000000000001px;color:#4f4f4f;-webkit-text-stroke:0.12px #4f4f4f;transform:scaleX(0.8928571428571428);transform-origin:0 0;">0%</div>
<div class="t" style="left:420.40px;top:294.02px;font-size:5.824000000000001px;color:#4f4f4f;-webkit-text-stroke:0.12px #4f4f4f;transform:scaleX(0.8928571428571428);transform-origin:0 0;">20%</div>
<div class="t" style="left:475.40px;top:294.02px;font-size:5.824000000000001px;color:#4f4f4f;-webkit-text-stroke:0.12px #4f4f4f;transform:scaleX(0.8928571428571428);transform-origin:0 0;">40%</div>
<div class="t" style="left:530.40px;top:294.02px;font-size:5.824000000000001px;color:#4f4f4f;-webkit-text-stroke:0.12px #4f4f4f;transform:scaleX(0.8928571428571428);transform-origin:0 0;">60%</div>
<div class="t" style="left:585.40px;top:294.02px;font-size:5.824000000000001px;color:#4f4f4f;-webkit-text-stroke:0.12px #4f4f4f;transform:scaleX(0.8928571428571428);transform-origin:0 0;">80%</div>
<div class="t" style="left:638.95px;top:294.02px;font-size:5.824000000000001px;color:#4f4f4f;-webkit-text-stroke:0.12px #4f4f4f;transform:scaleX(0.8928571428571428);transform-origin:0 0;">100%</div>
<div class="t" style="left:693.95px;top:294.02px;font-size:5.824000000000001px;color:#4f4f4f;-webkit-text-stroke:0.12px #4f4f4f;transform:scaleX(0.8928571428571428);transform-origin:0 0;">120%</div>
<div style="left:371.00px;top:305.00px;width:330.00px;height:1.00px;background:#d9d9d9;"></div>
<div style="left:370.00px;top:306.00px;width:1.00px;height:25.00px;background:#d9d9d9;"></div>
<div style="left:371.00px;top:313.00px;width:165.00px;height:10.00px;background:#ff5757;"></div>
<div style="left:536.00px;top:313.00px;width:41.00px;height:10.00px;background:#f8cbad;"></div>
<div style="left:577.00px;top:313.00px;width:41.00px;height:10.00px;background:#ffe699;"></div>
<div style="left:618.00px;top:313.00px;width:28.00px;height:10.00px;background:#c5e0b4;"></div>
<div style="left:371.00px;top:316.00px;width:233.00px;height:5.00px;background:#404040;"></div>
<div class="t" style="left:352.00px;top:314.42px;font-size:5.824000000000001px;color:#4f4f4f;-webkit-text-stroke:0.12px #4f4f4f;transform:scaleX(0.8928571428571428);transform-origin:0 0;">Value</div>
<div class="t" style="left:374.00px;top:314.52px;font-size:5.824000000000001px;color:#fff;transform:scaleX(0.8928571428571428);transform-origin:0 0;">85%</div>
<svg style="left:0;top:0" width="746" height="400" viewBox="0 0 746 400"><rect x="38.3" y="4.2" width="18.4" height="7.2" rx="3.6" fill="none" stroke="#fff" stroke-width="0.8"/><circle cx="42.4" cy="7.8" r="1.7" fill="#fff"/><text x="47" y="9.9" font-size="5.6" fill="#fff" font-family="Liberation Sans" transform="translate(47 9.9) scale(0.9 1) translate(-47 -9.9)">Off</text><rect x="63.8" y="5" width="7.8" height="7.8" rx="0.6" fill="none" stroke="#e8f0ea" stroke-width="0.8"/><path d="M65.5 5 V7.3 H69.9 V5" fill="none" stroke="#e8f0ea" stroke-width="0.7"/><path d="M65.5 12.8 V10 H69.9 V12.8" fill="none" stroke="#e8f0ea" stroke-width="0.7"/><path d="M79 5.5 L78.3 8.3 L81 8.6 M78.5 8.2 C80 6 84.5 5.5 85 8.8 C85.4 11 82.5 12.2 81 12.5" fill="none" stroke="#fff" stroke-width="0.8"/><path d="M88.14 7.17 L89.60 8.63 L91.06 7.17" fill="none" stroke="#fff" stroke-width="0.8"/><path d="M104 5.5 L104.7 8.3 L102 8.6 M104.5 8.2 C103 6 98.5 5.5 98 8.8 C97.6 11 100.5 12.2 102 12.5" fill="none" stroke="#6a9c7c" stroke-width="0.8"/><path d="M107.34 7.17 L108.80 8.63 L110.26 7.17" fill="none" stroke="#6a9c7c" stroke-width="0.8"/><path d="M117.6 6.2 H120.9" stroke="#c9dccf" stroke-width="0.6"/><path d="M118 7.6 L119.25 9.2 L120.5 7.6 Z" fill="#c9dccf"/><path d="M688 16.5 L694 12.2 H724 L729 8.5 M716 16.5 L724 12.2 M733 16.5 L746 6.5" fill="none" stroke="#1b6238" stroke-width="0.6" opacity="0.7"/><line x1="687.5" y1="8.3" x2="693" y2="8.3" stroke="#fff" stroke-width="0.8"/><rect x="709.5" y="6.8" width="4" height="4" fill="none" stroke="#fff" stroke-width="0.7"/><path d="M710.8 6.8 V5.6 H714.8 V9.6 H713.5" fill="none" stroke="#fff" stroke-width="0.7"/><path d="M732 5.8 L737 10.8 M737 5.8 L732 10.8" stroke="#fff" stroke-width="0.8"/><path d="M658.5 23 V27 H664 V25.5 M660 25.5 C660.5 23 662 22.3 664 22.3 M662.7 21 L664.3 22.3 L662.7 23.7" fill="none" stroke="#217346" stroke-width="0.7"/><path d="M695.2 21.3 H701.2 V25.5 H697.6 L696 27 V25.5 H695.2 Z" fill="none" stroke="#217346" stroke-width="0.7"/><rect x="8.4" y="37.2" width="10" height="11.6" rx="0.8" fill="#fff" stroke="#ed9b33" stroke-width="1.1"/><path d="M10.6 38.6 V36.6 L13.4 35 L16.2 36.6 V38.6 Z" fill="#fff" stroke="#737373" stroke-width="0.8"/><rect x="15" y="41" width="6.4" height="8.4" fill="#fff" stroke="#737373" stroke-width="0.9"/><path d="M13.52 60.96 L15.20 62.64 L16.88 60.96" fill="none" stroke="#605e5c" stroke-width="0.8"/><path d="M27.2 36.8 L30.4 41.2 M30.2 36.8 L27.4 41.2" stroke="#555" stroke-width="0.7"/><circle cx="27.3" cy="42.1" r="1" fill="#2b88d8"/><circle cx="30.3" cy="42.1" r="1" fill="#2b88d8"/><path d="M25.8 47 H29.3 L31 48.6 V52.9 H25.8 Z" fill="#fff" stroke="#666" stroke-width="0.7"/><path d="M27.8 48.6 H31.3 L33.3 50.5 V53.6 H27.8 Z" fill="#fff" stroke="#666" stroke-width="0.7"/><path d="M53.14 49.77 L54.60 51.23 L56.06 49.77" fill="none" stroke="#605e5c" stroke-width="0.8"/><path d="M26 61.5 L29.5 64.8 L32.5 61.8 L29 58.5 Z" fill="#ed9b33"/><path d="M29.5 60.5 L33.3 57 M31 58.3 L33 56.6" stroke="#555" stroke-width="1"/><path d="M27.3 61.3 L29.5 63.4" stroke="#fff" stroke-width="0.7"/><rect x="74.3" y="71.7" width="3.6" height="3.6" fill="none" stroke="#b5b3b1" stroke-width="0.6"/><path d="M75.2 72.60000000000001 L77.9 75.30000000000001 M78.1 73.60000000000001 V75.5 H76.2" fill="none" stroke="#444" stroke-width="0.8"/><path d="M135.06 42.33 L136.40 43.67 L137.74 42.33" fill="none" stroke="#444" stroke-width="0.8"/><path d="M159.36 42.33 L160.70 43.67 L162.04 42.33" fill="none" stroke="#444" stroke-width="0.8"/><text x="165.4" y="45.8" font-size="8.2" fill="#555" font-family="Liberation Sans">A</text><path d="M170.8 40.6 L171.9 39.4 L173 40.6" fill="none" stroke="#2b88d8" stroke-width="0.7"/><text x="176.6" y="45.8" font-size="7" fill="#555" font-family="Liberation Sans">A</text><path d="M181.4 39.6 L182.5 40.8 L183.6 39.6" fill="none" stroke="#2b88d8" stroke-width="0.7"/><text x="86.5" y="60.6" font-size="7" font-weight="bold" fill="#555" font-family="Liberation Sans">B</text><text x="97.6" y="60.6" font-size="7" font-style="italic" fill="#555" font-family="Liberation Serif">I</text><text x="107.8" y="60.3" font-size="6.6" fill="#555" font-family="Liberation Sans">U</text><line x1="108" y1="61.6" x2="112.9" y2="61.6" stroke="#555" stroke-width="0.6"/><path d="M118.04 57.47 L119.50 58.93 L120.96 57.47" fill="none" stroke="#605e5c" stroke-width="0.8"/><line x1="125" y1="53.5" x2="125" y2="62.5" stroke="#d2d0ce" stroke-width="0.6"/><rect x="128.8" y="54.3" width="7" height="7" fill="none" stroke="#737373" stroke-width="0.8"/><path d="M132.3 54.3 V61.3 M128.8 57.8 H135.8" stroke="#9a9a9a" stroke-width="0.5"/><path d="M139.64 57.47 L141.10 58.93 L142.56 57.47" fill="none" stroke="#605e5c" stroke-width="0.8"/><line x1="147.5" y1="53.5" x2="147.5" y2="62.5" stroke="#d2d0ce" stroke-width="0.6"/><path d="M151.5 57.2 L154.2 54.5 L157.2 57.5 L154.5 60 Z" fill="#fff" stroke="#555" stroke-width="0.7"/><circle cx="157.6" cy="58.6" r="0.8" fill="#2b6cb0"/><rect x="150.5" y="60.3" width="7.6" height="1.8" fill="#ffff00"/><path d="M161.04 57.47 L162.50 58.93 L163.96 57.47" fill="none" stroke="#605e5c" stroke-width="0.8"/><path d="M170 59.6 L172.9 53.9 L175.8 59.6 M171 57.6 H174.8" fill="none" stroke="#555" stroke-width="0.7"/><rect x="169.2" y="60.3" width="7.4" height="1.8" fill="#ff0000"/><path d="M179.54 57.47 L181.00 58.93 L182.46 57.47" fill="none" stroke="#605e5c" stroke-width="0.8"/><rect x="183.5" y="71.7" width="3.6" height="3.6" fill="none" stroke="#b5b3b1" stroke-width="0.6"/><path d="M184.39999999999998 72.60000000000001 L187.1 75.30000000000001 M187.29999999999998 73.60000000000001 V75.5 H185.39999999999998" fill="none" stroke="#444" stroke-width="0.8"/><line x1="195.3" y1="38.9" x2="202" y2="38.9" stroke="#7a7a7a" stroke-width="1.0"/><line x1="196.3" y1="41.1" x2="201" y2="41.1" stroke="#7a7a7a" stroke-width="1.0"/><line x1="195.3" y1="43.3" x2="202" y2="43.3" stroke="#7a7a7a" stroke-width="1.0"/><line x1="206" y1="40.2" x2="212.8" y2="40.2" stroke="#555" stroke-width="0.8"/><line x1="207" y1="42.5" x2="211.8" y2="42.5" stroke="#555" stroke-width="0.8"/><line x1="206" y1="44.8" x2="212.8" y2="44.8" stroke="#555" stroke-width="0.8"/><rect x="214.9" y="37.2" width="10.9" height="11.3" fill="#c8c6c4"/><line x1="217" y1="42.4" x2="224" y2="42.4" stroke="#444" stroke-width="0.8"/><line x1="218" y1="44.6" x2="223" y2="44.6" stroke="#444" stroke-width="0.8"/><line x1="217" y1="46.8" x2="224" y2="46.8" stroke="#444" stroke-width="0.8"/><line x1="227.5" y1="37" x2="227.5" y2="48" stroke="#d2d0ce" stroke-width="0.6"/><text x="230.4" y="44" font-size="5.6" fill="#444" font-family="Liberation Sans" transform="rotate(-35 233 42)">ab</text><path d="M232 45.6 L238.3 39.6 M236.5 39.4 L238.5 39.4 L238.5 41.4" fill="none" stroke="#2b88d8" stroke-width="0.7"/><path d="M240.84 41.77 L242.30 43.23 L243.76 41.77" fill="none" stroke="#605e5c" stroke-width="0.8"/><line x1="253.3" y1="36.5" x2="253.3" y2="63" stroke="#d2d0ce" stroke-width="0.6"/><line x1="195.2" y1="54.6" x2="202" y2="54.6" stroke="#8a8a8a" stroke-width="1.0"/><line x1="195.2" y1="56.9" x2="199.5" y2="56.9" stroke="#8a8a8a" stroke-width="1.0"/><line x1="195.2" y1="59.2" x2="202" y2="59.2" stroke="#8a8a8a" stroke-width="1.0"/><line x1="195.2" y1="61.3" x2="199.5" y2="61.3" stroke="#8a8a8a" stroke-width="1.0"/><line x1="206" y1="54.6" x2="213" y2="54.6" stroke="#8a8a8a" stroke-width="1.0"/><line x1="207.3" y1="56.9" x2="211.7" y2="56.9" stroke="#8a8a8a" stroke-width="1.0"/><line x1="206" y1="59.2" x2="213" y2="59.2" stroke="#8a8a8a" stroke-width="1.0"/><line x1="207.3" y1="61.3" x2="211.7" y2="61.3" stroke="#8a8a8a" stroke-width="1.0"/><line x1="217" y1="54.6" x2="224" y2="54.6" stroke="#8a8a8a" stroke-width="1.0"/><line x1="219.5" y1="56.9" x2="224" y2="56.9" stroke="#8a8a8a" stroke-width="1.0"/><line x1="217" y1="59.2" x2="224" y2="59.2" stroke="#8a8a8a" stroke-width="1.0"/><line x1="219.5" y1="61.3" x2="224" y2="61.3" stroke="#8a8a8a" stroke-width="1.0"/><line x1="227.7" y1="53.5" x2="227.7" y2="62.5" stroke="#d2d0ce" stroke-width="0.6"/><line x1="230.8" y1="54.6" x2="237.8" y2="54.6" stroke="#8a8a8a" stroke-width="1.0"/><line x1="230.8" y1="61.3" x2="237.8" y2="61.3" stroke="#8a8a8a" stroke-width="1.0"/><line x1="234" y1="56.9" x2="237.8" y2="56.9" stroke="#8a8a8a" stroke-width="1.0"/><line x1="234" y1="59.2" x2="237.8" y2="59.2" stroke="#8a8a8a" stroke-width="1.0"/><circle cx="232.4" cy="58" r="0.9" fill="#2b88d8"/><line x1="242" y1="54.6" x2="249" y2="54.6" stroke="#8a8a8a" stroke-width="1.0"/><line x1="242" y1="61.3" x2="249" y2="61.3" stroke="#8a8a8a" stroke-width="1.0"/><line x1="245.5" y1="56.9" x2="249" y2="56.9" stroke="#8a8a8a" stroke-width="1.0"/><line x1="245.5" y1="59.2" x2="249" y2="59.2" stroke="#8a8a8a" stroke-width="1.0"/><circle cx="244.2" cy="58" r="0.9" fill="#2b88d8"/><text x="257.6" y="42.6" font-size="5.4" fill="#444" font-family="Liberation Sans" transform="translate(257.6 42.6) scale(0.95 1) translate(-257.6 -42.6)">ab</text><text x="257.6" y="46.9" font-size="5" fill="#444" font-family="Liberation Sans">c</text><path d="M261 45.6 C263.5 46.5 265 44.5 263.8 42.8 M262.3 44.6 L261 45.7 L262.5 46.8" fill="none" stroke="#2b88d8" stroke-width="0.8"/><rect x="256.9" y="54.3" width="7.3" height="7.3" fill="#9cc3e6" stroke="#7a7a7a" stroke-width="0.7"/><path d="M258.5 56 h1.5 v1.5 h-1.5z M261 56 h1.5 v1.5 h-1.5z M258.5 58.5 h1.5 v1.5 h-1.5z M261 58.5 h1.5 v1.5 h-1.5z" fill="#2b88d8"/><path d="M313.04 57.47 L314.50 58.93 L315.96 57.47" fill="none" stroke="#605e5c" stroke-width="0.8"/><rect x="316.6" y="71.7" width="3.6" height="3.6" fill="none" stroke="#b5b3b1" stroke-width="0.6"/><path d="M317.5 72.60000000000001 L320.2 75.30000000000001 M320.40000000000003 73.60000000000001 V75.5 H318.5" fill="none" stroke="#444" stroke-width="0.8"/><path d="M387.66 42.33 L389.00 43.67 L390.34 42.33" fill="none" stroke="#444" stroke-width="0.8"/><text x="329.2" y="61.2" font-size="8.6" fill="#444" font-family="Liberation Sans" transform="translate(329.2 61.2) scale(0.95 1.05) translate(-329.2 -61.2)">$</text><path d="M339.24 57.47 L340.70 58.93 L342.16 57.47" fill="none" stroke="#605e5c" stroke-width="0.8"/><text x="345.9" y="61.7" font-size="9.4" fill="#444" font-family="Liberation Sans" transform="translate(345.9 61.7) scale(0.82 1) translate(-345.9 -61.7)">%</text><circle cx="361.2" cy="58.3" r="1.9" fill="#333"/><path d="M362.9 58.6 C363.2 60.8 361.8 62.3 359.4 62.8 L359.2 62.1 C360.8 61.5 361.5 60.5 361.4 59.5 Z" fill="#333"/><line x1="368.1" y1="53" x2="368.1" y2="63" stroke="#d2d0ce" stroke-width="0.6"/><text x="373.5" y="58" font-size="4.8" fill="#555" font-family="Liberation Sans">0</text><text x="372" y="62.2" font-size="4.8" fill="#555" font-family="Liberation Sans">.00</text><path d="M371.6 56 H375.5 M372.9 54.8 L371.6 56 L372.9 57.2" fill="none" stroke="#2b88d8" stroke-width="0.7"/><text x="383.5" y="58" font-size="4.8" fill="#555" font-family="Liberation Sans">.00</text><text x="385.5" y="62.2" font-size="4.8" fill="#555" font-family="Liberation Sans">0</text><path d="M382.5 60.3 H386 M384.8 59.1 L386 60.3 L384.8 61.5" fill="none" stroke="#2b88d8" stroke-width="0.7"/><rect x="389.90000000000003" y="71.7" width="3.6" height="3.6" fill="none" stroke="#b5b3b1" stroke-width="0.6"/><path d="M390.8 72.60000000000001 L393.5 75.30000000000001 M393.70000000000005 73.60000000000001 V75.5 H391.8" fill="none" stroke="#444" stroke-width="0.8"/><rect x="410.5" y="36.5" width="13.5" height="10.5" rx="0.6" fill="#fff" stroke="#737373" stroke-width="0.8"/><path d="M413.4 37 h3.5 v2.8 h-3.5z M417.6 37 h3.5 v2.8 h-3.5z M413.4 43.7 h3.5 v2.8 h-3.5z M417.6 43.7 h3.5 v2.8 h-3.5z" fill="#f25d5d"/><rect x="413.4" y="40.6" width="3.5" height="2.6" fill="#2b88d8"/><path d="M413 36.5 V47 M417.25 36.5 V47 M421.5 36.5 V47 M410.5 40.2 H424 M410.5 43.3 H424" stroke="#8a8a8a" stroke-width="0.45"/><rect x="442" y="36.5" width="14" height="10.799999999999997" rx="0.8" fill="#fff" stroke="#737373" stroke-width="0.8"/><line x1="446.67" y1="36.5" x2="446.67" y2="47.3" stroke="#737373" stroke-width="0.6400000000000001"/><line x1="451.33" y1="36.5" x2="451.33" y2="47.3" stroke="#737373" stroke-width="0.6400000000000001"/><line x1="442" y1="40.10" x2="456" y2="40.10" stroke="#737373" stroke-width="0.6400000000000001"/><line x1="442" y1="43.70" x2="456" y2="43.70" stroke="#737373" stroke-width="0.6400000000000001"/><path d="M447 40.2 H456 V47.3 H447 Z" fill="#5ea4e0"/><path d="M450.5 48 L457.5 40.5" stroke="#fff" stroke-width="2.2"/><path d="M450.5 48 L457.5 40.5" stroke="#555" stroke-width="0.6"/><circle cx="451" cy="47.6" r="1.3" fill="#2b88d8"/><rect x="466.3" y="36.5" width="13.699999999999989" height="11.0" rx="0.8" fill="#fff" stroke="#737373" stroke-width="0.8"/><rect x="468.2" y="38.8" width="9" height="5.8" fill="#5ea4e0"/><line x1="466.3" y1="38.5" x2="480" y2="38.5" stroke="#737373" stroke-width="0.6"/><line x1="468" y1="36.5" x2="468" y2="47.5" stroke="#737373" stroke-width="0.6"/><path d="M474.5 48 L481.5 40.5" stroke="#fff" stroke-width="2.2"/><path d="M474.5 48 L481.5 40.5" stroke="#555" stroke-width="0.6"/><circle cx="475" cy="47.6" r="1.3" fill="#2b88d8"/><path d="M430.66 61.23 L432.00 62.57 L433.34 61.23" fill="none" stroke="#605e5c" stroke-width="0.8"/><path d="M454.16 61.23 L455.50 62.57 L456.84 61.23" fill="none" stroke="#605e5c" stroke-width="0.8"/><path d="M479.66 61.23 L481.00 62.57 L482.34 61.23" fill="none" stroke="#605e5c" stroke-width="0.8"/><rect x="495" y="36.5" width="15" height="11.0" rx="1.5" fill="#fff" stroke="#737373" stroke-width="0.8"/><line x1="500.00" y1="36.5" x2="500.00" y2="47.5" stroke="#737373" stroke-width="0.6400000000000001"/><line x1="505.00" y1="36.5" x2="505.00" y2="47.5" stroke="#737373" stroke-width="0.6400000000000001"/><line x1="495" y1="40.17" x2="510" y2="40.17" stroke="#737373" stroke-width="0.6400000000000001"/><line x1="495" y1="43.83" x2="510" y2="43.83" stroke="#737373" stroke-width="0.6400000000000001"/><rect x="496" y="40.6" width="14" height="2.9" fill="#2b88d8"/><path d="M496 39.5 L493.6 42 L496 44.5" fill="none" stroke="#2b88d8" stroke-width="0.9"/><rect x="515.3" y="36.5" width="14.5" height="11.0" rx="1.5" fill="#fff" stroke="#737373" stroke-width="0.8"/><line x1="520.13" y1="36.5" x2="520.13" y2="47.5" stroke="#737373" stroke-width="0.6400000000000001"/><line x1="524.97" y1="36.5" x2="524.97" y2="47.5" stroke="#737373" stroke-width="0.6400000000000001"/><line x1="515.3" y1="40.17" x2="529.8" y2="40.17" stroke="#737373" stroke-width="0.6400000000000001"/><line x1="515.3" y1="43.83" x2="529.8" y2="43.83" stroke="#737373" stroke-width="0.6400000000000001"/><rect x="517" y="40.6" width="8.5" height="2.9" fill="#2b88d8"/><path d="M524.5 39.2 L530 45.5 M530 39.2 L524.5 45.5" stroke="#f25d5d" stroke-width="0.8"/><rect x="535.7" y="36.5" width="14.5" height="11.0" rx="1.5" fill="#fff" stroke="#737373" stroke-width="0.8"/><line x1="540.53" y1="36.5" x2="540.53" y2="47.5" stroke="#737373" stroke-width="0.6400000000000001"/><line x1="545.37" y1="36.5" x2="545.37" y2="47.5" stroke="#737373" stroke-width="0.6400000000000001"/><line x1="535.7" y1="40.17" x2="550.2" y2="40.17" stroke="#737373" stroke-width="0.6400000000000001"/><line x1="535.7" y1="43.83" x2="550.2" y2="43.83" stroke="#737373" stroke-width="0.6400000000000001"/><rect x="539" y="40.6" width="8.3" height="2.9" fill="#2b88d8"/><rect x="539" y="34.1" width="8.3" height="1.3" fill="#2b88d8"/><path d="M500.86 61.53 L502.20 62.87 L503.54 61.53" fill="none" stroke="#605e5c" stroke-width="0.8"/><path d="M521.16 61.53 L522.50 62.87 L523.84 61.53" fill="none" stroke="#605e5c" stroke-width="0.8"/><path d="M541.46 61.53 L542.80 62.87 L544.14 61.53" fill="none" stroke="#605e5c" stroke-width="0.8"/><path d="M568.8 36.1 V35.4 H563 L566.2 38.5 L563 41.6 H568.8 V40.9" fill="none" stroke="#555" stroke-width="0.7"/><path d="M600.64 37.97 L602.10 39.43 L603.56 37.97" fill="none" stroke="#605e5c" stroke-width="0.8"/><rect x="562.4" y="46.6" width="6.5" height="5.7" fill="#fff" stroke="#555" stroke-width="0.7"/><path d="M565.6 47.5 V51 M564.3 49.8 L565.6 51 L566.9 49.8" fill="none" stroke="#2b88d8" stroke-width="0.7"/><path d="M580.46 48.73 L581.80 50.07 L583.14 48.73" fill="none" stroke="#605e5c" stroke-width="0.8"/><path d="M562.3 60 L566.5 56.8 L569.5 59.8 L565.3 63.2 Z" fill="#b146c2"/><path d="M564 61.7 L567 58.6" stroke="#fff" stroke-width="0.5"/><path d="M587.26 59.83 L588.60 61.17 L589.94 59.83" fill="none" stroke="#605e5c" stroke-width="0.8"/><text x="609.6" y="41.4" font-size="7.4" fill="#2b88d8" font-family="Liberation Sans">A</text><text x="609.8" y="48.6" font-size="7.4" fill="#555" font-family="Liberation Sans">Z</text><path d="M614.3 38 H624 L620.2 42.3 V46 L618.3 44.9 V42.3 Z" fill="#fff" stroke="#555" stroke-width="0.8"/><path d="M621.96 61.23 L623.30 62.57 L624.64 61.23" fill="none" stroke="#605e5c" stroke-width="0.8"/><circle cx="639.8" cy="40.3" r="4.6" fill="none" stroke="#555" stroke-width="0.8"/><line x1="636.6" y1="43.6" x2="631.6" y2="48.6" stroke="#555" stroke-width="0.9"/><path d="M645.16 61.23 L646.50 62.57 L647.84 61.23" fill="none" stroke="#605e5c" stroke-width="0.8"/><path d="M666.6 35.4 L662.6 42.4 H666.3 L663.4 48.4 L672.2 40.4 H668.4 L671.6 35.4 Z" fill="#a5cff3" stroke="#2b88d8" stroke-width="0.8" stroke-linejoin="round"/><path d="M738.2 75.2 L740.3 73.2 L742.4 75.2" fill="none" stroke="#444" stroke-width="0.7"/><path d="M738.9 84 L740.8 81.8 L742.7 84 Z" fill="#444"/><path d="M738.9 372.6 L740.8 374.8 L742.7 372.6 Z" fill="#444"/><path d="M5.6 381.6 L3.4 383.5 L5.6 385.4 Z" fill="#444"/><path d="M731.9 381.6 L734.1 383.5 L731.9 385.4 Z" fill="#444"/><rect x="27.3" y="390.3" width="6.8" height="6.8" fill="#8a8a8a" stroke="#666" stroke-width="0.8"/><path d="M28.3 392.1 H33.1 M28.3 393.8 H33.1 M28.8 395.6 L30.8 394.5 L32.8 395.6" stroke="#ddd" stroke-width="0.5" fill="none"/><rect x="607.8" y="390.8" width="6.6" height="6.6" fill="#777"/><path d="M607.8 392.4 H614.4 M607.8 394.1 H614.4 M607.8 395.8 H614.4" stroke="#d2d0ce" stroke-width="0.45"/><rect x="627.5" y="391" width="6.8" height="6.4" fill="#9a9a9a"/><path d="M629.2 391 V397.4 M632.6 391 V397.4" stroke="#f3f2f1" stroke-width="0.5"/><rect x="627.5" y="391" width="6.8" height="6.4" fill="none" stroke="#777" stroke-width="0.6"/><rect x="646.6" y="391" width="7" height="6.4" fill="none" stroke="#777" stroke-width="0.7"/><path d="M646.6 394.2 H650.2 V391" stroke="#777" stroke-width="0.6" fill="none"/></svg>
</body></html>
